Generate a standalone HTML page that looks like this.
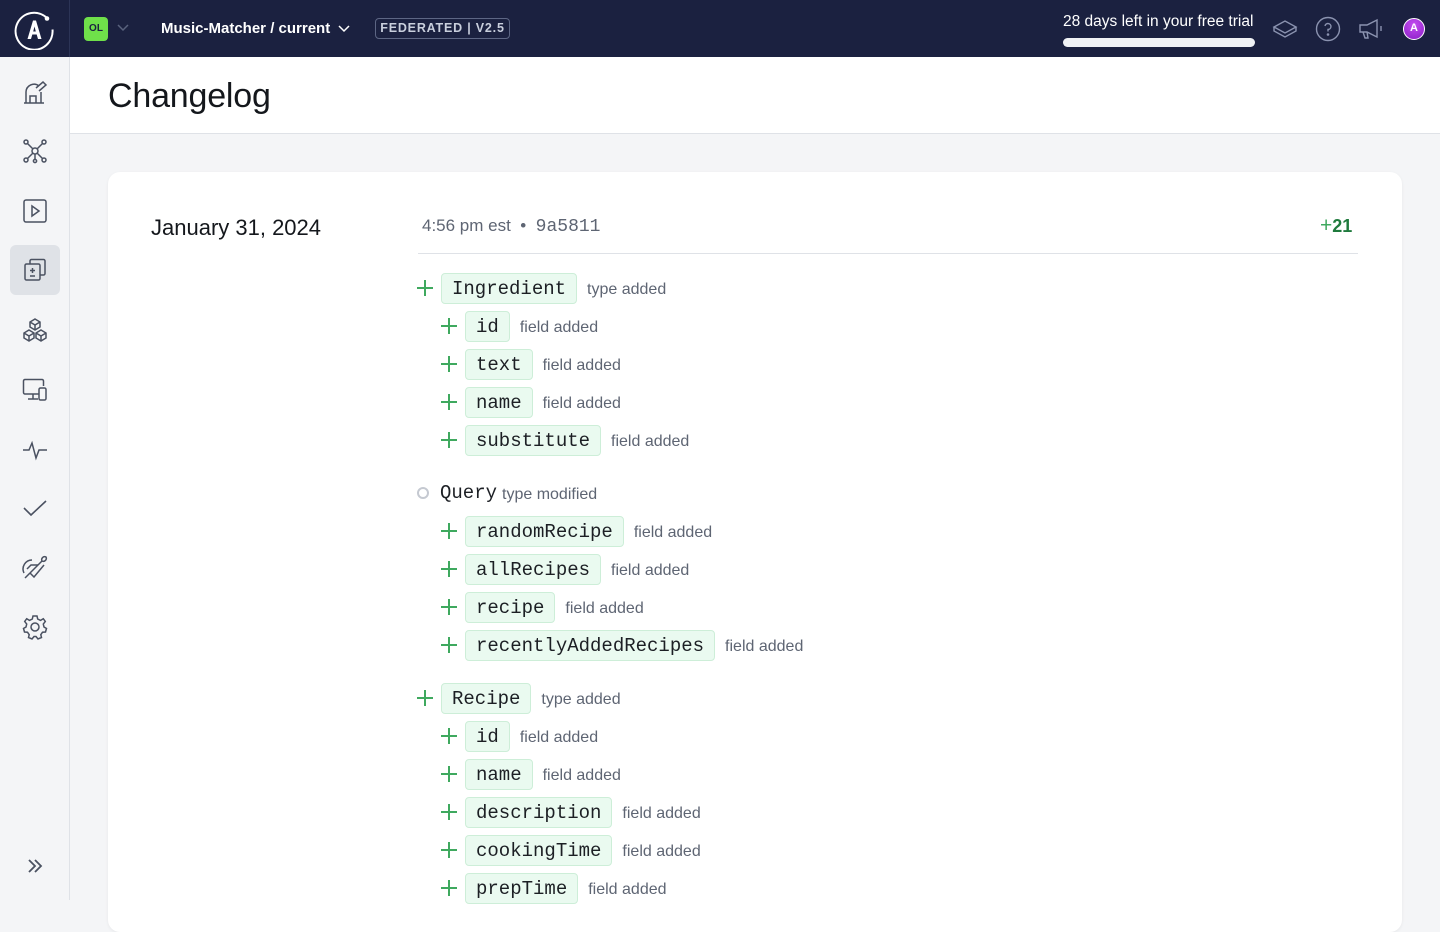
<!DOCTYPE html>
<html><head><meta charset="utf-8"><style>
*{box-sizing:border-box;margin:0;padding:0}
body{width:1440px;height:900px;overflow:hidden;background:#f4f5f7;font-family:"Liberation Sans",sans-serif;position:relative}
.hdr{position:absolute;left:0;top:0;width:1440px;height:57px;background:#1b2140;color:#fff}
.side{position:absolute;left:0;top:57px;width:70px;height:843px;background:#f4f5f7;border-right:1px solid #dfe2e7}
.titlebar{position:absolute;left:70px;top:57px;width:1370px;height:77px;background:#fff;border-bottom:1px solid #dfe2e7}
.titlebar h1{position:absolute;left:38px;top:20px;font-size:34px;font-weight:500;color:#14171c;letter-spacing:-0.2px}
.card{position:absolute;left:108px;top:172px;width:1294px;height:760px;background:#fff;border-radius:12px;box-shadow:0 1px 3px rgba(0,0,0,.06)}
.abs{position:absolute}
.row{position:absolute;display:flex;align-items:center;height:32px}
.plus{width:16px;height:16px;position:relative;margin-right:8px}
.plus:before,.plus:after{content:"";position:absolute;background:#3fa95f}
.plus:before{left:7px;top:0;width:1.6px;height:16px}
.plus:after{left:0;top:7px;width:16px;height:1.6px}
.chip{height:31px;padding:0 10px;border:1px solid #cdeed8;background:#eafaf0;border-radius:4px;font-family:"Liberation Mono",monospace;font-size:19px;color:#1c1f24;line-height:30px}
.desc{margin-left:10px;font-size:16px;color:#5e6573;padding-top:3px}
.ic{position:absolute;left:22px}
svg{display:block}
</style></head><body>
<div class="hdr">
  <svg class="abs" style="left:14px;top:9px" width="41" height="41" viewBox="0 0 41 41"><path d="M33 9 A18.5 18.5 0 1 0 38.5 20.5" fill="none" stroke="#fff" stroke-width="2"/><circle cx="33" cy="9.5" r="2.3" fill="#fff"/><path d="M13.5 30 L19 11.5 H22 L27.5 30 H24 L22.7 25.5 H18.3 L17 30 Z M19.2 22.5 H21.8 L20.5 17.5 Z" fill="#fff"/></svg>
  <div class="abs" style="left:69px;top:0;width:1px;height:57px;background:#2c3456"></div>
  <div class="abs" style="left:84px;top:17px;width:24px;height:24px;background:#6fe04a;border-radius:4px;color:#1b2140;font-size:10px;font-weight:bold;text-align:center;line-height:24px">OL</div>
  <svg class="abs" style="left:117px;top:24px" width="12" height="8"><path d="M1 1 L6 6 L11 1" fill="none" stroke="#59627d" stroke-width="1.5"/></svg>
  <div class="abs" style="left:161px;top:20px;font-size:15px;font-weight:bold;color:#fff">Music-Matcher / current</div>
  <svg class="abs" style="left:338px;top:25px" width="12" height="8"><path d="M1 1 L6 6 L11 1" fill="none" stroke="#fff" stroke-width="1.5"/></svg>
  <div class="abs" style="left:375px;top:18px;height:21px;width:135px;border:1px solid #5d6684;border-radius:4px;color:#c9cfdd;font-size:12.5px;font-weight:bold;letter-spacing:.8px;text-align:center;line-height:19px">FEDERATED | V2.5</div>
  <div class="abs" style="left:1063px;top:13px;font-size:15.5px;color:#fff">28 days left in your free trial</div>
  <div class="abs" style="left:1063px;top:38px;width:192px;height:9px;background:#f0f2f5;border-radius:5px"></div>
  <svg class="abs" style="left:1272px;top:16px" width="26" height="26" viewBox="0 0 26 26" fill="none" stroke="#8b93b0" stroke-width="1.4"><path d="M2 11 L13 5 L24 11 L13 17 Z"/><path d="M2 11 V15 L13 21 L24 15 V11"/></svg>
  <svg class="abs" style="left:1315px;top:16px" width="26" height="26" viewBox="0 0 26 26" fill="none" stroke="#8b93b0" stroke-width="1.4"><circle cx="13" cy="13" r="11.5"/><path d="M10 10 A3 3 0 1 1 13 13.5 V15.5"/><circle cx="13" cy="18.5" r=".6" fill="#8b93b0"/></svg>
  <svg class="abs" style="left:1357px;top:16px" width="28" height="26" viewBox="0 0 28 26" fill="none" stroke="#8b93b0" stroke-width="1.4"><path d="M3 9 H10 L20 4 V21 L10 16 H3 Z"/><path d="M6 16 L8 22 H11 L10 16"/><path d="M24 10 V15"/></svg>
  <div class="abs" style="left:1403px;top:18px;width:22px;height:22px;border-radius:50%;background:radial-gradient(circle at 50% 30%,#c44cf0,#8a1fc6);border:1.5px solid #fff;color:#fff;font-size:11px;font-weight:bold;text-align:center;line-height:19px">A</div>
</div>
<div class="side">
  <div class="abs" style="left:10px;top:188px;width:50px;height:50px;background:#dfe2e7;border-radius:6px"></div>
  <svg class="ic" style="top:22px" width="26" height="26" viewBox="0 0 26 26" fill="none" stroke="#4a5161" stroke-width="1.5"><path d="M2 24 H22"/><path d="M4 24 V13 A8 8 0 0 1 17 7"/><path d="M19 13 V24"/><path d="M8 24 V17 H14 V24"/><path d="M14 9 L21 3 L24 6 L17 12"/></svg>
  <svg class="ic" style="top:81px" width="26" height="26" viewBox="0 0 26 26" fill="none" stroke="#4a5161" stroke-width="1.5"><circle cx="13" cy="13" r="3"/><circle cx="4" cy="4" r="2"/><circle cx="22" cy="4" r="2"/><circle cx="4" cy="22" r="2"/><circle cx="22" cy="22" r="2"/><circle cx="13" cy="23" r="1.6"/><path d="M5.5 5.5 L11 11 M20.5 5.5 L15 11 M5.5 20.5 L11 15 M20.5 20.5 L15 15 M13 16 V21.5"/></svg>
  <svg class="ic" style="top:141px" width="26" height="26" viewBox="0 0 26 26" fill="none" stroke="#4a5161" stroke-width="1.5"><rect x="2" y="2" width="22" height="22" rx="2"/><path d="M10 8 L17 13 L10 18 Z"/></svg>
  <svg class="ic" style="top:200px" width="26" height="26" viewBox="0 0 26 26" fill="none" stroke="#4a5161" stroke-width="1.5"><rect x="3" y="7" width="15" height="16" rx="1.5"/><path d="M8 7 V4 A1.5 1.5 0 0 1 9.5 2.5 H21.5 A1.5 1.5 0 0 1 23 4 V16.5 A1.5 1.5 0 0 1 21.5 18 H18"/><path d="M10.5 11 V16 M8 13.5 H13 M8 19 H13"/></svg>
  <svg class="ic" style="top:260px" width="26" height="26" viewBox="0 0 26 26" fill="none" stroke="#4a5161" stroke-width="1.5"><path d="M13 2 L18 5 V10 L13 13 L8 10 V5 Z M8 5 L13 8 L18 5 M13 8 V13"/><path d="M7 13 L12 16 V21 L7 24 L2 21 V16 Z M2 16 L7 19 L12 16 M7 19 V24"/><path d="M19 13 L24 16 V21 L19 24 L14 21 V16 Z M14 16 L19 19 L24 16 M19 19 V24"/></svg>
  <svg class="ic" style="top:320px" width="26" height="26" viewBox="0 0 26 26" fill="none" stroke="#4a5161" stroke-width="1.5"><path d="M17 17 H3 A1.5 1.5 0 0 1 1.5 15.5 V4 A1.5 1.5 0 0 1 3 2.5 H20 A1.5 1.5 0 0 1 21.5 4 V9"/><path d="M11 17 V22 M6 22 H16"/><rect x="17" y="11" width="7" height="12" rx="1.5"/></svg>
  <svg class="ic" style="top:380px" width="26" height="26" viewBox="0 0 26 26" fill="none" stroke="#4a5161" stroke-width="1.5"><path d="M1 13 H7 L10 6 L14 21 L17 13 H25"/></svg>
  <svg class="ic" style="top:439px" width="26" height="26" viewBox="0 0 26 26" fill="none" stroke="#4a5161" stroke-width="1.6"><path d="M2 12 L9 19 L24 5"/></svg>
  <svg class="ic" style="top:498px" width="26" height="26" viewBox="0 0 26 26" fill="none" stroke="#4a5161" stroke-width="1.5"><path d="M8 18 L20 6 A3 3 0 0 1 24 2 A3 3 0 0 1 20 6"/><path d="M8 18 L12 22 L22 10"/><path d="M16 10 H9 L5 14"/><path d="M8 18 L3 23"/><path d="M10 5 A9 9 0 0 0 2 18"/></svg>
  <svg class="ic" style="top:557px" width="26" height="26" viewBox="0 0 26 26" fill="none" stroke="#4a5161" stroke-width="1.5"><circle cx="13" cy="13" r="4"/><path d="M11 2 H15 L15.7 5 L18.5 6.4 L21.3 4.7 L23.3 7.5 L21.3 10 L22 13 L24.5 14.5 L23.5 18 L20.5 18.2 L18.8 20.7 L19.5 23.5 L16 25 L14 22.5 H12 L10 25 L6.5 23.5 L7.2 20.7 L5.5 18.2 L2.5 18 L1.5 14.5 L4 13 L4.7 10 L2.7 7.5 L4.7 4.7 L7.5 6.4 L10.3 5 Z"/></svg>
  <svg class="abs" style="left:27px;top:801px" width="16" height="16" viewBox="0 0 16 16" fill="none" stroke="#4a5161" stroke-width="1.8"><path d="M2 2 L8 8 L2 14 M8 2 L14 8 L8 14"/></svg>
</div>
<div class="titlebar"><h1>Changelog</h1></div>
<div class="card"></div>
<div class="abs" style="left:151px;top:215px;font-size:22px;color:#14171c">January 31, 2024</div>
<div class="abs" style="left:422px;top:216px;font-size:17px;color:#5e6573">4:56 pm est &nbsp;•&nbsp; <span style="font-family:'Liberation Mono',monospace;font-size:18px">9a5811</span></div>
<div class="abs" style="left:1320px;top:214px;font-size:18px;font-weight:bold;color:#1f7a3d"><span style="color:#3fa95f;font-weight:normal;font-size:21px">+</span>21</div>
<div class="abs" style="left:418px;top:253px;width:940px;height:1px;background:#dfe2e7"></div>

<div class="row" style="left:417px;top:272px"><div class="plus"></div><div class="chip">Ingredient</div><div class="desc">type added</div></div>
<div class="row" style="left:441px;top:310px"><div class="plus"></div><div class="chip">id</div><div class="desc">field added</div></div>
<div class="row" style="left:441px;top:348px"><div class="plus"></div><div class="chip">text</div><div class="desc">field added</div></div>
<div class="row" style="left:441px;top:386px"><div class="plus"></div><div class="chip">name</div><div class="desc">field added</div></div>
<div class="row" style="left:441px;top:424px"><div class="plus"></div><div class="chip">substitute</div><div class="desc">field added</div></div>

<div class="row" style="left:417px;top:477px"><div style="width:12px;height:12px;border:2px solid #c5c9d1;border-radius:50%;margin-right:11px"></div><div style="font-family:'Liberation Mono',monospace;font-size:19px;color:#1c1f24">Query</div><div class="desc" style="margin-left:5px">type modified</div></div>
<div class="row" style="left:441px;top:515px"><div class="plus"></div><div class="chip">randomRecipe</div><div class="desc">field added</div></div>
<div class="row" style="left:441px;top:553px"><div class="plus"></div><div class="chip">allRecipes</div><div class="desc">field added</div></div>
<div class="row" style="left:441px;top:591px"><div class="plus"></div><div class="chip">recipe</div><div class="desc">field added</div></div>
<div class="row" style="left:441px;top:629px"><div class="plus"></div><div class="chip">recentlyAddedRecipes</div><div class="desc">field added</div></div>

<div class="row" style="left:417px;top:682px"><div class="plus"></div><div class="chip">Recipe</div><div class="desc">type added</div></div>
<div class="row" style="left:441px;top:720px"><div class="plus"></div><div class="chip">id</div><div class="desc">field added</div></div>
<div class="row" style="left:441px;top:758px"><div class="plus"></div><div class="chip">name</div><div class="desc">field added</div></div>
<div class="row" style="left:441px;top:796px"><div class="plus"></div><div class="chip">description</div><div class="desc">field added</div></div>
<div class="row" style="left:441px;top:834px"><div class="plus"></div><div class="chip">cookingTime</div><div class="desc">field added</div></div>
<div class="row" style="left:441px;top:872px"><div class="plus"></div><div class="chip">prepTime</div><div class="desc">field added</div></div>
</body></html>
